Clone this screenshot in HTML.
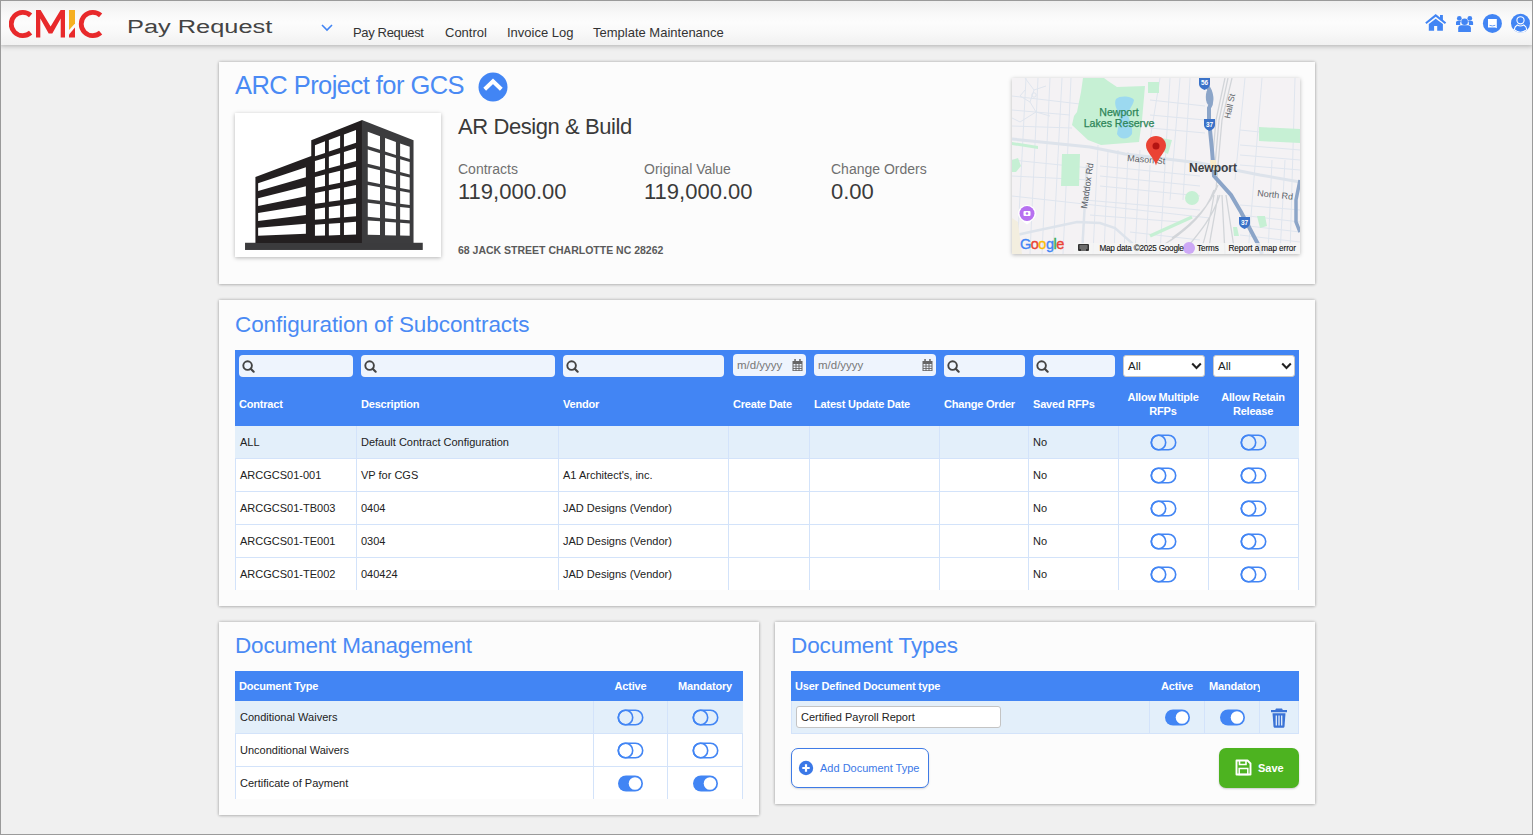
<!DOCTYPE html>
<html><head><meta charset="utf-8">
<style>
*{box-sizing:border-box;margin:0;padding:0}
html,body{width:1533px;height:835px;overflow:hidden;background:#f0f0f0;font-family:"Liberation Sans",sans-serif;color:#222}
.a{position:absolute;white-space:nowrap}
#frame{position:absolute;left:0;top:0;width:1533px;height:835px;border:1px solid #9a9a9a;z-index:50;pointer-events:none}
#hdr{position:absolute;left:0;top:0;width:1533px;height:45px;background:linear-gradient(#eeeeee 0%,#f8f8f8 30%,#fcfcfc 50%,#f9f9f9 70%,#f1f1f1 100%);box-shadow:0 1px 5px rgba(0,0,0,.28);z-index:10}
.card{position:absolute;background:#fcfcfc;box-shadow:0 0 3px rgba(0,0,0,.3),0 1px 3px rgba(0,0,0,.1)}
.ttl{position:absolute;font-size:25px;color:#4a8af4;line-height:30px;white-space:nowrap}
.th{position:absolute;background:#4285f4;color:#fff}
.hd{position:absolute;font-size:11px;font-weight:bold;color:#fff;line-height:14px;white-space:nowrap;letter-spacing:-.2px}
.row{position:absolute;height:33px;border-bottom:1px solid #d6e6fb;background:#fff}
.row.sel{background:#e3f0fa}
.vl{position:absolute;top:0;bottom:0;width:1px;background:#d6e6fb}
.cell{position:absolute;top:0;line-height:32px;font-size:11px;color:#222;white-space:nowrap}
.inp{position:absolute;background:#eef4fd;border-radius:4px;height:22px}
.sel2{position:absolute;background:#fff;border:1px solid #c8c8c8;border-radius:3px;height:22px;font-size:11.5px;color:#222;line-height:21px;padding-left:4px}
.tg{position:absolute}
.hd.c{text-align:center}
.t2{font-size:22.5px}
.ph{font-size:11.5px;color:#777;line-height:14px}
</style></head><body>
<div id="frame"></div>

<!-- HEADER -->
<div id="hdr">
  <svg class="a" style="left:9px;top:10px" width="94" height="28" viewBox="0 0 94 28">
    <g fill="none" stroke="#e8292b" stroke-width="4.8">
      <path d="M21.6 5.4 A11.6 11.6 0 1 0 21.6 22.6"/>
      <path d="M91.6 5.4 A11.6 11.6 0 1 0 91.6 22.6"/>
    </g>
    <path fill="#e8292b" d="M27 0h4.6l10 16.5 10-16.5H56v27.6h-4.3V8.6L43.3 23.4h-3.6L31.3 8.6v19H27z"/>
    <path fill="#f6b021" d="M60 0h6v13.6l-6 6.4z"/>
    <path fill="#e8292b" d="M66 17.6v10h-6v-3.2z"/>
  </svg>
  <div class="a" style="left:127px;top:17px;font-size:18px;color:#444;transform:scaleX(1.41);transform-origin:0 0">Pay Request</div>
  <svg class="a" style="left:321px;top:24px" width="12" height="8" viewBox="0 0 12 8"><path d="M1 1l5 5 5-5" fill="none" stroke="#4285f4" stroke-width="1.6"/></svg>
  <div class="a" style="left:353px;top:25px;font-size:13px;color:#333;letter-spacing:-.35px">Pay Request</div>
  <div class="a" style="left:445px;top:25px;font-size:13px;color:#333">Control</div>
  <div class="a" style="left:507px;top:25px;font-size:13px;color:#333">Invoice Log</div>
  <div class="a" style="left:593px;top:25px;font-size:13px;color:#333">Template Maintenance</div>
  <svg class="a" style="left:1420px;top:10px" width="113" height="28" viewBox="1420 10 113 28">
    <g fill="#4285f4">
      <path d="M1425.2 22.4l10.5-8.3 10.5 8.3-1.3 1.6-9.2-7.3-9.2 7.3z"/>
      <rect x="1440" y="15" width="2.9" height="5.2"/>
      <path d="M1428.8 24.1l6.9-5.3 7.2 5.3v6.6h-5.7v-4.8h-3.1v4.8h-5.3z"/>
      <circle cx="1464.6" cy="21.7" r="3.3"/>
      <path d="M1458.2 31.9v-3.6c0-1.8 1.2-3 3-3h6.7c1.8 0 3 1.2 3 3v3.6z"/>
      <circle cx="1459.3" cy="18.4" r="2.4"/><circle cx="1469.8" cy="18.4" r="2.4"/>
      <path d="M1456 24.9v-2.4c0-.9.6-1.5 1.5-1.5h3.6c-.6.6-.9 1.4-.9 2.3v1.6z"/>
      <path d="M1473.1 24.9v-2.4c0-.9-.6-1.5-1.5-1.5h-3.6c.6.6.9 1.4.9 2.3v1.6z"/>
      <circle cx="1492.4" cy="23.4" r="9.5"/>
      <circle cx="1520.5" cy="23.3" r="9.5"/>
    </g>
    <path d="M1488 19h8.8v9.2l-1.6-.6h-7.2z" fill="#fff"/>
    <path d="M1489.5 25.3q2.9 1.2 5.8 0" stroke="#4285f4" stroke-width=".8" fill="none"/>
    <circle cx="1520.5" cy="20.3" r="3.6" fill="none" stroke="#fff" stroke-width="1.1"/>
    <path d="M1514.2 29.6c.4-2.5 1.9-4 3.1-4.6q3.2 2 6.4 0c1.2.6 2.7 2.1 3.1 4.6q-3.2 2.6-6.3 2.6q-3.1 0-6.3-2.6z" fill="none" stroke="#fff" stroke-width="1.1"/>
  </svg>
</div>

<!-- CARD 1 -->
<div class="card" style="left:219px;top:62px;width:1096px;height:222px"></div>
<div class="ttl" style="left:235px;top:70px;font-size:25.5px;letter-spacing:-.55px">ARC Project for GCS</div>
<svg class="a" style="left:478px;top:72px" width="30" height="30" viewBox="0 0 30 30"><circle cx="15" cy="15" r="14.5" fill="#4285f4"/><path d="M6.7 17.3L15 9.2l8.3 8.1" fill="none" stroke="#fff" stroke-width="4"/></svg>
<div class="a" style="left:235px;top:113px;width:206px;height:144px;background:#fff;box-shadow:0 1px 4px rgba(0,0,0,.28)"></div>
<svg class="a" style="left:240px;top:115px" width="195" height="140" viewBox="0 0 1163 835"><rect x="30" y="762" width="1060" height="43" fill="#3b3b3d"/><polygon points="92,370 425,245 425,150 729,30 729,764 92,764" fill="#231f20"/><polygon points="727,30 1035,150 1035,764 727,764" fill="#3c3c3e"/><g fill="#fff"><polygon points="447,180 507,157 507,226 447,246"/><polygon points="447,275 507,256 507,324 447,341"/><polygon points="447,370 507,355 507,423 447,436"/><polygon points="447,465 507,453 507,522 447,530"/><polygon points="447,560 507,552 507,620 447,625"/><polygon points="447,654 507,650 507,718 447,720"/><polygon points="530,149 597,124 597,196 530,218"/><polygon points="530,249 597,228 597,300 530,318"/><polygon points="530,349 597,332 597,404 530,418"/><polygon points="530,449 597,436 597,508 530,518"/><polygon points="530,549 597,540 597,612 530,618"/><polygon points="530,648 597,644 597,716 530,718"/><polygon points="620,116 692,89 692,165 620,189"/><polygon points="620,221 692,199 692,275 620,294"/><polygon points="620,326 692,308 692,384 620,399"/><polygon points="620,432 692,418 692,494 620,505"/><polygon points="620,537 692,528 692,604 620,610"/><polygon points="620,642 692,637 692,713 620,715"/><polygon points="762,100 835,126 835,208 762,185"/><polygon points="762,206 835,228 835,309 762,291"/><polygon points="762,311 835,329 835,411 762,396"/><polygon points="762,417 835,431 835,512 762,502"/><polygon points="762,523 835,532 835,614 762,607"/><polygon points="762,629 835,634 835,716 762,714"/><polygon points="865,137 930,161 930,238 865,217"/><polygon points="865,237 930,257 930,334 865,317"/><polygon points="865,337 930,353 930,430 865,417"/><polygon points="865,436 930,449 930,526 865,516"/><polygon points="865,536 930,545 930,622 865,616"/><polygon points="865,636 930,641 930,718 865,717"/><polygon points="955,170 1012,190 1012,263 955,245"/><polygon points="955,264 1012,281 1012,355 955,340"/><polygon points="955,359 1012,373 1012,446 955,435"/><polygon points="955,453 1012,464 1012,537 955,529"/><polygon points="955,548 1012,555 1012,628 955,624"/><polygon points="955,643 1012,647 1012,720 955,719"/><polygon points="108,407 393,312 393,371 108,454"/><polygon points="108,497 393,425 393,485 108,543"/><polygon points="108,585 393,538 393,597 108,632"/><polygon points="108,673 393,649 393,708 108,720"/></g></svg>

<div class="a" style="left:458px;top:114px;font-size:22px;color:#3a3a3a;letter-spacing:-.42px">AR Design &amp; Build</div>
<div class="a" style="left:458px;top:161px;font-size:14px;color:#707070">Contracts</div>
<div class="a" style="left:458px;top:179px;font-size:22px;color:#3a3a3a">119,000.00</div>
<div class="a" style="left:644px;top:161px;font-size:14px;color:#707070">Original Value</div>
<div class="a" style="left:644px;top:179px;font-size:22px;color:#3a3a3a">119,000.00</div>
<div class="a" style="left:831px;top:161px;font-size:14px;color:#707070">Change Orders</div>
<div class="a" style="left:831px;top:179px;font-size:22px;color:#3a3a3a">0.00</div>
<div class="a" style="left:458px;top:244px;font-size:10.5px;font-weight:bold;color:#5a5a5a">68 JACK STREET CHARLOTTE NC 28262</div>

<div class="a" style="left:1012px;top:78px;width:288px;height:176px;background:#f2eff2;box-shadow:0 1px 4px rgba(0,0,0,.28)"></div>
<svg class="a" style="left:1012px;top:78px" width="288" height="176" viewBox="1012 78 288 176">
<rect x="1012" y="78" width="288" height="176" fill="#f4f2f4"/>
<g stroke="#dfe5ee" stroke-width="1" fill="none">
<path d="M1026 78L1017 254M1038 78L1030 254M1050 78L1042 254M1062 78L1053 254M1071 78L1063 254"/>
<path d="M1098 145L1093 254M1108 150L1104 254M1118 150L1114 254M1128 152L1124 254M1140 150L1135 254M1150 165L1146 254M1170 78L1160 254M1180 78L1170 200M1190 78L1183 200M1160 78L1150 140"/>
<path d="M1245 78L1235 180M1262 78L1248 254M1272 160L1268 254M1285 160L1280 254M1295 78L1290 254"/>
<path d="M1012 96L1080 104M1012 110L1070 115M1012 126L1072 128M1012 160L1090 168M1012 176L1090 180M1012 196L1210 218M1085 200L1200 210M1100 186L1200 196M1100 176L1200 186M1100 166L1200 176M1090 215L1180 222"/>
<path d="M1150 100L1205 106M1150 115L1205 120M1150 128L1205 133M1240 130L1300 136M1240 145L1300 150M1240 155L1300 160M1240 165L1300 170M1240 205L1300 210M1240 215L1300 222M1240 225L1300 232M1240 235L1300 242M1130 232L1200 240"/>
<path d="M1025 78L1034 90L1030 102L1020 96L1025 90M1034 90L1046 86M1030 102L1036 112L1050 116M1012 118L1020 122L1036 112"/><circle cx="1034" cy="95" r="2.2"/>
</g>
<path d="M1012 139L1090 147L1125 154L1200 163L1260 175L1300 182" stroke="#dde3eb" stroke-width="3" fill="none"/>

<path d="M1087 165L1082 254" stroke="#dde3eb" stroke-width="2.5" fill="none"/><path d="M1012 236L1030 232L1077 222L1100 223L1115 228L1132 243L1138 254" stroke="#dde3eb" stroke-width="2.5" fill="none"/><path d="M1012 218L1018 222L1022 254L1012 254Z" fill="#f3eedf"/>
<path d="M1083 78L1104 78L1108 81L1117 87L1145 86L1142 120L1139 142L1101 145L1088 140L1072 125L1074 116L1077 112L1081 92Z" fill="#c6f0d4"/>
<path d="M1148 82L1159 82L1159 93L1148 93Z" fill="#c6f0d4"/>
<path d="M1062 154L1080 154L1079 186L1061 186Z" fill="#c6f0d4"/>
<path d="M1161 138L1172 140L1168 154L1160 150Z" fill="#c6f0d4"/>
<path d="M1259 127L1300 129L1300 143L1259 141Z" fill="#c6f0d4"/>
<path d="M1116 99C1120 95 1132 96 1134 100C1133 106 1128 110 1128 115C1130 122 1133 128 1132 134C1128 140 1120 140 1117 134C1118 126 1121 118 1118 112C1116 108 1114 103 1116 99Z" fill="#9cd9f0"/>
<path d="M1012 142L1038 146L1038 149L1012 145Z" fill="#c6f0d4"/><path d="M1012 160L1018 158L1021 166L1016 172L1012 172Z" fill="#c6f0d4"/>
<circle cx="1192" cy="198" r="7" fill="#c6f0d4"/>
<path d="M1150 236L1192 217" stroke="#c6f0d4" stroke-width="3.5" fill="none"/>
<path d="M1257 216L1265 216L1267 226L1260 228Z" fill="#c6f0d4"/><path d="M1233 227L1237 227L1239 236L1234 236Z" fill="#c6f0d4"/>
<g stroke="#d2d5d9" fill="none" stroke-width="1.3">
<path d="M1232 78L1222 120L1218 165L1216 190M1228 78L1219 120L1215 165M1225 78L1216 120L1212 165"/>
<path d="M1218 185C1210 205 1195 222 1172 238M1216 188C1207 210 1192 226 1170 241M1214 190C1206 212 1190 228 1165 244M1220 195C1212 218 1200 232 1185 250M1222 195L1225 254M1226 195L1235 254M1214 195C1210 222 1205 238 1200 254M1218 195C1214 220 1210 238 1208 254"/>
</g>
<ellipse cx="1209" cy="97" rx="3.2" ry="8" fill="#8ca5c8"/><path d="M1207 86C1212 92 1213 102 1209 108L1209 120L1212 150L1214 176L1231 195L1241 212L1258 244L1262 254" stroke="#8ca5c8" stroke-width="4" fill="none"/>
<path d="M1300 180L1296 200L1296 222L1300 232" stroke="#8ca5c8" stroke-width="3.5" fill="none"/>
<path d="M1210 160L1216 160L1217 170L1211 170Z" fill="#f8ebc8"/>
<g>
<path d="M1199 78h11v6c0 3-3 5-5.5 6c-2.5-1-5.5-3-5.5-6z" fill="#3b72c8"/>
<text x="1204.5" y="85" font-size="6.5" font-weight="bold" fill="#fff" text-anchor="middle" font-family="Liberation Sans">56</text>
<path d="M1204 119h11v6c0 3-3 5-5.5 6c-2.5-1-5.5-3-5.5-6z" fill="#3b72c8"/>
<text x="1209.5" y="127" font-size="6.5" font-weight="bold" fill="#fff" text-anchor="middle" font-family="Liberation Sans">37</text>
<path d="M1239 217h11v6c0 3-3 5-5.5 6c-2.5-1-5.5-3-5.5-6z" fill="#3b72c8"/>
<text x="1244.5" y="225" font-size="6.5" font-weight="bold" fill="#fff" text-anchor="middle" font-family="Liberation Sans">37</text>
</g>
<text x="1119" y="115.5" font-size="10.6" fill="#2d8558" text-anchor="middle" font-family="Liberation Sans" stroke="#2d8558" stroke-width=".25">Newport</text>
<text x="1119" y="126.8" font-size="10.6" fill="#2d8558" text-anchor="middle" font-family="Liberation Sans" stroke="#2d8558" stroke-width=".25">Lakes Reserve</text>
<text x="1127" y="161" font-size="9" fill="#5a5f66" font-family="Liberation Sans" transform="rotate(5 1127 161)">Mason St</text>
<text x="1189" y="172" font-size="12" font-weight="bold" fill="#3c4043" font-family="Liberation Sans">Newport</text>
<text x="1257" y="196" font-size="9" fill="#5a5f66" font-family="Liberation Sans" transform="rotate(6 1257 196)">North Rd</text>
<text x="1087" y="209" font-size="9" fill="#5a5f66" font-family="Liberation Sans" transform="rotate(-82 1087 209)">Maddox Rd</text>
<text x="1230" y="119" font-size="8.5" fill="#5a5f66" font-family="Liberation Sans" transform="rotate(-78 1230 119)">Hall St</text>
<path d="M1156 136c-5.5 0-10 4.2-10 9.5c0 6.5 8 12 10 20c2-8 10-13.5 10-20c0-5.3-4.5-9.5-10-9.5z" fill="#ea4335"/>
<circle cx="1156" cy="146" r="3.5" fill="#b31412"/>
<path d="M1027 205c-5 0-9 3.8-9 8.5c0 4 3 6.5 9 11c6-4.5 9-7 9-11c0-4.7-4-8.5-9-8.5z" fill="#fff"/>
<circle cx="1027" cy="213.5" r="7.5" fill="#b770f0"/>
<rect x="1023.5" y="211" width="7" height="5" rx="1" fill="#fff"/>
<circle cx="1027" cy="213.5" r="1.3" fill="#b770f0"/>
<rect x="1012" y="243" width="288" height="11" fill="#f4f2f4" opacity=".0"/>
<rect x="1074" y="243" width="226" height="11" fill="#f5f5f5" opacity=".8"/>
<circle cx="1189" cy="248" r="6" fill="#c9a0f5" opacity=".9"/>
<text x="1020" y="248.5" font-size="14.5" font-family="Liberation Sans" letter-spacing="-.5" stroke-width=".35" stroke="currentColor"><tspan fill="#4285f4" stroke="#4285f4">G</tspan><tspan fill="#ea4335" stroke="#ea4335">o</tspan><tspan fill="#fbbc05" stroke="#fbbc05">o</tspan><tspan fill="#4285f4" stroke="#4285f4">g</tspan><tspan fill="#34a853" stroke="#34a853">l</tspan><tspan fill="#ea4335" stroke="#ea4335">e</tspan></text>
<rect x="1078" y="244" width="11" height="7" rx="1" fill="#333"/>
<path d="M1079.5 246h8M1079.5 248h8M1081 250h5" stroke="#f5f5f5" stroke-width=".6"/>
<text x="1099.5" y="251" font-size="8.2" fill="#111" font-family="Liberation Sans" letter-spacing="-.25" stroke="#111" stroke-width=".1">Map data ©2025 Google</text>
<text x="1197" y="251" font-size="8.2" fill="#111" font-family="Liberation Sans" letter-spacing="-.1" stroke="#111" stroke-width=".1">Terms</text>
<text x="1228.5" y="251" font-size="8.2" fill="#111" font-family="Liberation Sans" letter-spacing="-.1" stroke="#111" stroke-width=".1">Report a map error</text>
</svg>


<!-- CARD 2 -->
<div class="card" style="left:219px;top:300px;width:1096px;height:306px"></div>
<div class="ttl t2" style="left:235px;top:310px;letter-spacing:-.07px">Configuration of Subcontracts</div>
<div class="a" style="left:235px;top:350px;width:1064px;height:76px;background:#4285f4"></div>
<div class="inp" style="left:239px;top:355px;width:114px"></div>
<svg class="a" style="left:242px;top:359.5px" width="14" height="14" viewBox="0 0 14 14"><circle cx="5.6" cy="5.6" r="4.3" fill="none" stroke="#444" stroke-width="1.9"/><path d="M8.7 8.7L11.7 11.7" stroke="#444" stroke-width="2.1" stroke-linecap="round"/></svg>
<div class="inp" style="left:361px;top:355px;width:194px"></div>
<svg class="a" style="left:364px;top:359.5px" width="14" height="14" viewBox="0 0 14 14"><circle cx="5.6" cy="5.6" r="4.3" fill="none" stroke="#444" stroke-width="1.9"/><path d="M8.7 8.7L11.7 11.7" stroke="#444" stroke-width="2.1" stroke-linecap="round"/></svg>
<div class="inp" style="left:563px;top:355px;width:161px"></div>
<svg class="a" style="left:566px;top:359.5px" width="14" height="14" viewBox="0 0 14 14"><circle cx="5.6" cy="5.6" r="4.3" fill="none" stroke="#444" stroke-width="1.9"/><path d="M8.7 8.7L11.7 11.7" stroke="#444" stroke-width="2.1" stroke-linecap="round"/></svg>
<div class="inp" style="left:733px;top:354px;width:73px"></div>
<div class="a ph" style="left:737px;top:358px">m/d/yyyy</div>
<svg class="a" style="left:792px;top:359px" width="11" height="12" viewBox="0 0 11 12"><rect x="0.5" y="2" width="10" height="10" fill="#666"/><g fill="#eef4fd"><rect x="1.5" y="5" width="2" height="1.6"/><rect x="4.5" y="5" width="2" height="1.6"/><rect x="7.5" y="5" width="2" height="1.6"/><rect x="1.5" y="7.5" width="2" height="1.6"/><rect x="4.5" y="7.5" width="2" height="1.6"/><rect x="7.5" y="7.5" width="2" height="1.6"/><rect x="1.5" y="10" width="2" height="1.2"/><rect x="4.5" y="10" width="2" height="1.2"/><rect x="7.5" y="10" width="2" height="1.2"/></g><rect x="2.3" y="0" width="1.5" height="3" fill="#666"/><rect x="7.2" y="0" width="1.5" height="3" fill="#666"/></svg>
<div class="inp" style="left:814px;top:354px;width:122px"></div>
<div class="a ph" style="left:818px;top:358px">m/d/yyyy</div>
<svg class="a" style="left:922px;top:359px" width="11" height="12" viewBox="0 0 11 12"><rect x="0.5" y="2" width="10" height="10" fill="#666"/><g fill="#eef4fd"><rect x="1.5" y="5" width="2" height="1.6"/><rect x="4.5" y="5" width="2" height="1.6"/><rect x="7.5" y="5" width="2" height="1.6"/><rect x="1.5" y="7.5" width="2" height="1.6"/><rect x="4.5" y="7.5" width="2" height="1.6"/><rect x="7.5" y="7.5" width="2" height="1.6"/><rect x="1.5" y="10" width="2" height="1.2"/><rect x="4.5" y="10" width="2" height="1.2"/><rect x="7.5" y="10" width="2" height="1.2"/></g><rect x="2.3" y="0" width="1.5" height="3" fill="#666"/><rect x="7.2" y="0" width="1.5" height="3" fill="#666"/></svg>
<div class="inp" style="left:944px;top:355px;width:81px"></div>
<svg class="a" style="left:947px;top:359.5px" width="14" height="14" viewBox="0 0 14 14"><circle cx="5.6" cy="5.6" r="4.3" fill="none" stroke="#444" stroke-width="1.9"/><path d="M8.7 8.7L11.7 11.7" stroke="#444" stroke-width="2.1" stroke-linecap="round"/></svg>
<div class="inp" style="left:1033px;top:355px;width:82px"></div>
<svg class="a" style="left:1036px;top:359.5px" width="14" height="14" viewBox="0 0 14 14"><circle cx="5.6" cy="5.6" r="4.3" fill="none" stroke="#444" stroke-width="1.9"/><path d="M8.7 8.7L11.7 11.7" stroke="#444" stroke-width="2.1" stroke-linecap="round"/></svg>
<div class="sel2" style="left:1123px;top:355px;width:82px">All</div>
<svg class="a" style="left:1191px;top:362px" width="11" height="8" viewBox="0 0 11 8"><path d="M1.2 1.6l4.3 4.3 4.3-4.3" fill="none" stroke="#222" stroke-width="2.1"/></svg>
<div class="sel2" style="left:1213px;top:355px;width:82px">All</div>
<svg class="a" style="left:1281px;top:362px" width="11" height="8" viewBox="0 0 11 8"><path d="M1.2 1.6l4.3 4.3 4.3-4.3" fill="none" stroke="#222" stroke-width="2.1"/></svg>
<div class="hd" style="left:239px;top:397px">Contract</div>
<div class="hd" style="left:361px;top:397px">Description</div>
<div class="hd" style="left:563px;top:397px">Vendor</div>
<div class="hd" style="left:733px;top:397px">Create Date</div>
<div class="hd" style="left:814px;top:397px">Latest Update Date</div>
<div class="hd" style="left:944px;top:397px">Change Order</div>
<div class="hd" style="left:1033px;top:397px">Saved RFPs</div>
<div class="hd c" style="left:1118px;width:90px;top:390px">Allow Multiple<br>RFPs</div>
<div class="hd c" style="left:1208px;width:90px;top:390px">Allow Retain<br>Release</div>
<div class="a" style="left:235px;top:426px;width:1064px;height:164px;background:#fff;border-left:1px solid #d3e3fa;border-right:1px solid #d3e3fa"></div>
<div class="a" style="left:235px;top:426px;width:1064px;height:33px;background:#e3effa"></div>
<div class="a" style="left:235px;top:458px;width:1064px;height:1px;background:#d3e3fa"></div>
<div class="a" style="left:235px;top:491px;width:1064px;height:1px;background:#d3e3fa"></div>
<div class="a" style="left:235px;top:524px;width:1064px;height:1px;background:#d3e3fa"></div>
<div class="a" style="left:235px;top:557px;width:1064px;height:1px;background:#d3e3fa"></div>
<div class="a" style="left:356px;top:426px;width:1px;height:164px;background:#d3e3fa"></div>
<div class="a" style="left:558px;top:426px;width:1px;height:164px;background:#d3e3fa"></div>
<div class="a" style="left:728px;top:426px;width:1px;height:164px;background:#d3e3fa"></div>
<div class="a" style="left:809px;top:426px;width:1px;height:164px;background:#d3e3fa"></div>
<div class="a" style="left:939px;top:426px;width:1px;height:164px;background:#d3e3fa"></div>
<div class="a" style="left:1028px;top:426px;width:1px;height:164px;background:#d3e3fa"></div>
<div class="a" style="left:1118px;top:426px;width:1px;height:164px;background:#d3e3fa"></div>
<div class="a" style="left:1208px;top:426px;width:1px;height:164px;background:#d3e3fa"></div>
<div class="cell" style="left:240px;top:426px">ALL</div>
<div class="cell" style="left:361px;top:426px">Default Contract Configuration</div>
<div class="cell" style="left:563px;top:426px"></div>
<div class="cell" style="left:1033px;top:426px">No</div>
<svg class="a" style="left:1149.5px;top:433.5px" width="27" height="17" viewBox="0 0 27 17"><rect x="1.3" y="1.3" width="24.4" height="14.4" rx="7.2" fill="none" stroke="#4285f4" stroke-width="1.6"/><circle cx="8.5" cy="8.5" r="7.2" fill="none" stroke="#4285f4" stroke-width="1.6"/></svg>
<svg class="a" style="left:1239.5px;top:433.5px" width="27" height="17" viewBox="0 0 27 17"><rect x="1.3" y="1.3" width="24.4" height="14.4" rx="7.2" fill="none" stroke="#4285f4" stroke-width="1.6"/><circle cx="8.5" cy="8.5" r="7.2" fill="none" stroke="#4285f4" stroke-width="1.6"/></svg>
<div class="cell" style="left:240px;top:459px">ARCGCS01-001</div>
<div class="cell" style="left:361px;top:459px">VP for CGS</div>
<div class="cell" style="left:563px;top:459px">A1 Architect's, inc.</div>
<div class="cell" style="left:1033px;top:459px">No</div>
<svg class="a" style="left:1149.5px;top:466.5px" width="27" height="17" viewBox="0 0 27 17"><rect x="1.3" y="1.3" width="24.4" height="14.4" rx="7.2" fill="none" stroke="#4285f4" stroke-width="1.6"/><circle cx="8.5" cy="8.5" r="7.2" fill="none" stroke="#4285f4" stroke-width="1.6"/></svg>
<svg class="a" style="left:1239.5px;top:466.5px" width="27" height="17" viewBox="0 0 27 17"><rect x="1.3" y="1.3" width="24.4" height="14.4" rx="7.2" fill="none" stroke="#4285f4" stroke-width="1.6"/><circle cx="8.5" cy="8.5" r="7.2" fill="none" stroke="#4285f4" stroke-width="1.6"/></svg>
<div class="cell" style="left:240px;top:492px">ARCGCS01-TB003</div>
<div class="cell" style="left:361px;top:492px">0404</div>
<div class="cell" style="left:563px;top:492px">JAD Designs (Vendor)</div>
<div class="cell" style="left:1033px;top:492px">No</div>
<svg class="a" style="left:1149.5px;top:499.5px" width="27" height="17" viewBox="0 0 27 17"><rect x="1.3" y="1.3" width="24.4" height="14.4" rx="7.2" fill="none" stroke="#4285f4" stroke-width="1.6"/><circle cx="8.5" cy="8.5" r="7.2" fill="none" stroke="#4285f4" stroke-width="1.6"/></svg>
<svg class="a" style="left:1239.5px;top:499.5px" width="27" height="17" viewBox="0 0 27 17"><rect x="1.3" y="1.3" width="24.4" height="14.4" rx="7.2" fill="none" stroke="#4285f4" stroke-width="1.6"/><circle cx="8.5" cy="8.5" r="7.2" fill="none" stroke="#4285f4" stroke-width="1.6"/></svg>
<div class="cell" style="left:240px;top:525px">ARCGCS01-TE001</div>
<div class="cell" style="left:361px;top:525px">0304</div>
<div class="cell" style="left:563px;top:525px">JAD Designs (Vendor)</div>
<div class="cell" style="left:1033px;top:525px">No</div>
<svg class="a" style="left:1149.5px;top:532.5px" width="27" height="17" viewBox="0 0 27 17"><rect x="1.3" y="1.3" width="24.4" height="14.4" rx="7.2" fill="none" stroke="#4285f4" stroke-width="1.6"/><circle cx="8.5" cy="8.5" r="7.2" fill="none" stroke="#4285f4" stroke-width="1.6"/></svg>
<svg class="a" style="left:1239.5px;top:532.5px" width="27" height="17" viewBox="0 0 27 17"><rect x="1.3" y="1.3" width="24.4" height="14.4" rx="7.2" fill="none" stroke="#4285f4" stroke-width="1.6"/><circle cx="8.5" cy="8.5" r="7.2" fill="none" stroke="#4285f4" stroke-width="1.6"/></svg>
<div class="cell" style="left:240px;top:558px">ARCGCS01-TE002</div>
<div class="cell" style="left:361px;top:558px">040424</div>
<div class="cell" style="left:563px;top:558px">JAD Designs (Vendor)</div>
<div class="cell" style="left:1033px;top:558px">No</div>
<svg class="a" style="left:1149.5px;top:565.5px" width="27" height="17" viewBox="0 0 27 17"><rect x="1.3" y="1.3" width="24.4" height="14.4" rx="7.2" fill="none" stroke="#4285f4" stroke-width="1.6"/><circle cx="8.5" cy="8.5" r="7.2" fill="none" stroke="#4285f4" stroke-width="1.6"/></svg>
<svg class="a" style="left:1239.5px;top:565.5px" width="27" height="17" viewBox="0 0 27 17"><rect x="1.3" y="1.3" width="24.4" height="14.4" rx="7.2" fill="none" stroke="#4285f4" stroke-width="1.6"/><circle cx="8.5" cy="8.5" r="7.2" fill="none" stroke="#4285f4" stroke-width="1.6"/></svg>

<!-- CARD 3 -->
<div class="card" style="left:219px;top:622px;width:540px;height:193px"></div>
<div class="ttl t2" style="left:235px;top:631px;letter-spacing:-.17px">Document Management</div>
<div class="a" style="left:235px;top:671px;width:508px;height:30px;background:#4285f4"></div>
<div class="hd" style="left:239px;top:679px">Document Type</div>
<div class="hd c" style="left:594px;width:73px;top:679px">Active</div>
<div class="hd c" style="left:667px;width:76px;top:679px">Mandatory</div>
<div class="a" style="left:235px;top:701px;width:508px;height:98px;background:#fff;border-left:1px solid #d3e3fa;border-right:1px solid #d3e3fa"></div>
<div class="a" style="left:235px;top:701px;width:508px;height:33px;background:#e3effa"></div>
<div class="a" style="left:235px;top:733px;width:508px;height:1px;background:#d3e3fa"></div>
<div class="a" style="left:235px;top:766px;width:508px;height:1px;background:#d3e3fa"></div>
<div class="a" style="left:593px;top:701px;width:1px;height:98px;background:#d3e3fa"></div>
<div class="a" style="left:667px;top:701px;width:1px;height:98px;background:#d3e3fa"></div>
<div class="cell" style="left:240px;top:701px">Conditional Waivers</div>
<svg class="a" style="left:616.5px;top:708.5px" width="27" height="17" viewBox="0 0 27 17"><rect x="1.3" y="1.3" width="24.4" height="14.4" rx="7.2" fill="none" stroke="#4285f4" stroke-width="1.6"/><circle cx="8.5" cy="8.5" r="7.2" fill="none" stroke="#4285f4" stroke-width="1.6"/></svg>
<svg class="a" style="left:691.5px;top:708.5px" width="27" height="17" viewBox="0 0 27 17"><rect x="1.3" y="1.3" width="24.4" height="14.4" rx="7.2" fill="none" stroke="#4285f4" stroke-width="1.6"/><circle cx="8.5" cy="8.5" r="7.2" fill="none" stroke="#4285f4" stroke-width="1.6"/></svg>
<div class="cell" style="left:240px;top:734px">Unconditional Waivers</div>
<svg class="a" style="left:616.5px;top:741.5px" width="27" height="17" viewBox="0 0 27 17"><rect x="1.3" y="1.3" width="24.4" height="14.4" rx="7.2" fill="none" stroke="#4285f4" stroke-width="1.6"/><circle cx="8.5" cy="8.5" r="7.2" fill="none" stroke="#4285f4" stroke-width="1.6"/></svg>
<svg class="a" style="left:691.5px;top:741.5px" width="27" height="17" viewBox="0 0 27 17"><rect x="1.3" y="1.3" width="24.4" height="14.4" rx="7.2" fill="none" stroke="#4285f4" stroke-width="1.6"/><circle cx="8.5" cy="8.5" r="7.2" fill="none" stroke="#4285f4" stroke-width="1.6"/></svg>
<div class="cell" style="left:240px;top:767px">Certificate of Payment</div>
<svg class="a" style="left:616.5px;top:774.5px" width="27" height="17" viewBox="0 0 27 17"><rect x="1" y="0.5" width="25" height="16" rx="8" fill="#4285f4"/><circle cx="18" cy="8.5" r="6.3" fill="#fff"/></svg>
<svg class="a" style="left:691.5px;top:774.5px" width="27" height="17" viewBox="0 0 27 17"><rect x="1" y="0.5" width="25" height="16" rx="8" fill="#4285f4"/><circle cx="18" cy="8.5" r="6.3" fill="#fff"/></svg>

<!-- CARD 4 -->
<div class="card" style="left:775px;top:622px;width:540px;height:182px"></div>
<div class="ttl t2" style="left:791px;top:631px;letter-spacing:-.1px">Document Types</div>
<div class="a" style="left:791px;top:671px;width:508px;height:30px;background:#4285f4"></div>
<div class="hd" style="left:795px;top:679px">User Defined Document type</div>
<div class="hd c" style="left:1149px;width:56px;top:679px">Active</div>
<div class="hd" style="left:1209px;width:51px;top:679px;overflow:hidden">Mandatory</div>
<div class="a" style="left:791px;top:701px;width:508px;height:33px;background:#e3effa;border:1px solid #d3e3fa;border-top:0"></div>
<div class="a" style="left:1149px;top:701px;width:1px;height:33px;background:#d3e3fa"></div>
<div class="a" style="left:1204px;top:701px;width:1px;height:33px;background:#d3e3fa"></div>
<div class="a" style="left:1259px;top:701px;width:1px;height:33px;background:#d3e3fa"></div>
<div class="a" style="left:796px;top:706px;width:205px;height:22px;background:#fff;border:1px solid #c4c4c4;border-radius:3px"></div>
<div class="cell" style="left:801px;top:701px">Certified Payroll Report</div>
<svg class="a" style="left:1163.5px;top:708.5px" width="27" height="17" viewBox="0 0 27 17"><rect x="1" y="0.5" width="25" height="16" rx="8" fill="#4285f4"/><circle cx="18" cy="8.5" r="6.3" fill="#fff"/></svg>
<svg class="a" style="left:1218.5px;top:708.5px" width="27" height="17" viewBox="0 0 27 17"><rect x="1" y="0.5" width="25" height="16" rx="8" fill="#4285f4"/><circle cx="18" cy="8.5" r="6.3" fill="#fff"/></svg>
<svg class="a" style="left:1270px;top:707px" width="18" height="21" viewBox="0 0 18 21"><path d="M6 1.5h6l.8 1.6H17v2.2H1V3.1h4.2z" fill="#3b73d6"/><path d="M2.5 6.3h13l-1 13.2c-.1.8-.7 1.3-1.5 1.3H5c-.8 0-1.4-.5-1.5-1.3z" fill="#3b73d6"/><path d="M6.3 8.5v10M9 8.5v10M11.7 8.5v10" stroke="#e3effa" stroke-width="1.3"/></svg>
<div class="a" style="left:791px;top:748px;width:138px;height:40px;background:#fff;border:1.3px solid #3f7be6;border-radius:7px;box-shadow:0 1px 2px rgba(0,0,0,.15)"></div>
<svg class="a" style="left:798px;top:760px" width="16" height="16" viewBox="0 0 16 16"><circle cx="8" cy="8" r="7.2" fill="#3b78e7"/><path d="M8 4.3v7.4M4.3 8h7.4" stroke="#fff" stroke-width="2.2"/></svg>
<div class="a" style="left:820px;top:762px;font-size:11px;color:#3b78e7">Add Document Type</div>
<div class="a" style="left:1219px;top:748px;width:80px;height:40px;background:#4db320;border-radius:7px;box-shadow:0 1px 2px rgba(0,0,0,.2)"></div>
<svg class="a" style="left:1235px;top:759px" width="17" height="17" viewBox="0 0 17 17"><path d="M1.5 1.5h11l3 3v11h-14z" fill="none" stroke="#fff" stroke-width="1.9" stroke-linejoin="round"/><path d="M4.5 1.5v4h6.5v-4" fill="none" stroke="#fff" stroke-width="1.6"/><rect x="4.2" y="9.5" width="8.6" height="6" fill="none" stroke="#fff" stroke-width="1.5"/></svg>
<div class="a" style="left:1258px;top:762px;font-size:11px;font-weight:bold;color:#fff">Save</div>

</body></html>
